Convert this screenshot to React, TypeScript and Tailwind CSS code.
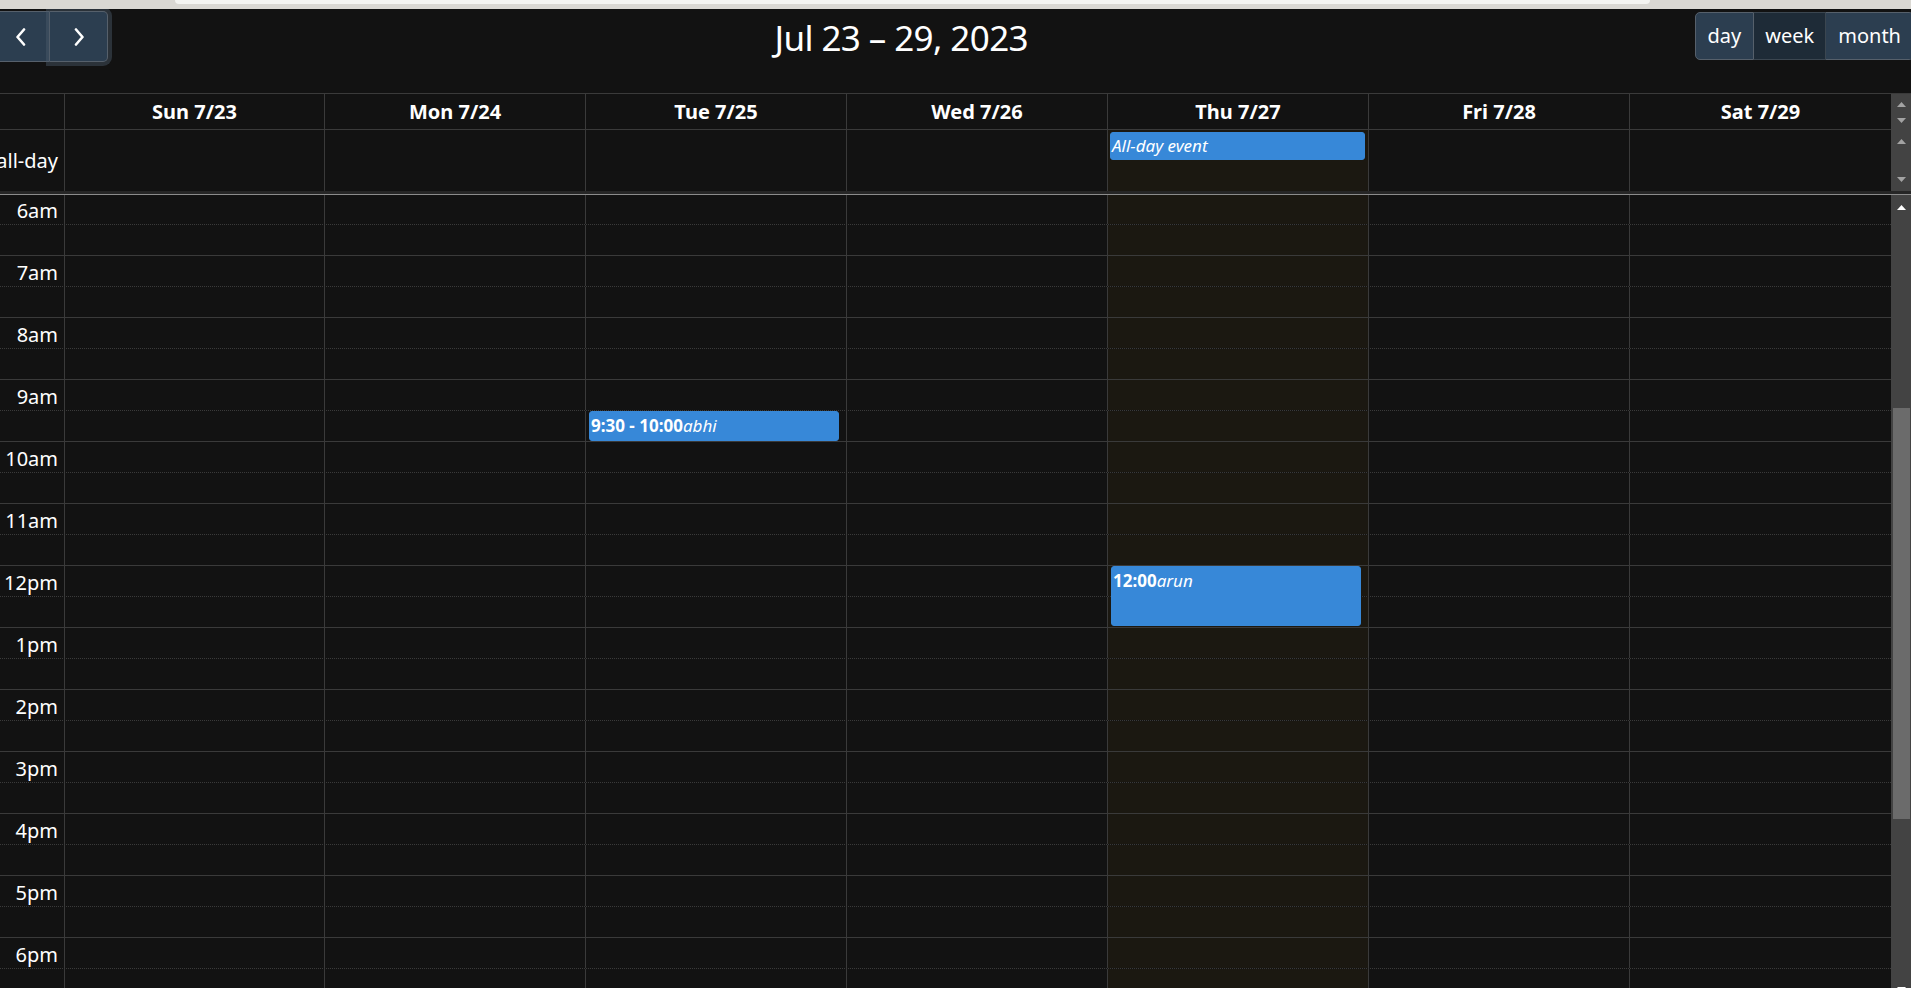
import React from 'react';

const days = [
  { label: 'Sun 7/23', w: 'w-[260px]' },
  { label: 'Mon 7/24', w: 'w-[261px]' },
  { label: 'Tue 7/25', w: 'w-[261px]' },
  { label: 'Wed 7/26', w: 'w-[261px]' },
  { label: 'Thu 7/27', w: 'w-[261px]' },
  { label: 'Fri 7/28', w: 'w-[261px]' },
  { label: 'Sat 7/29', w: 'w-[262px]' },
];
const TODAY = 4;
const hours = ['6am', '7am', '8am', '9am', '10am', '11am', '12pm', '1pm', '2pm', '3pm', '4pm', '5pm', '6pm'];

function Tri({ up, color }: { up?: boolean; color: string }) {
  return (
    <svg width="9" height="5" viewBox="0 0 9 5" className="block">
      <polygon points={up ? '0,5 9,5 4.5,0' : '0,0 9,0 4.5,5'} fill={color} />
    </svg>
  );
}

function Chevron({ left }: { left?: boolean }) {
  return (
    <svg width="12" height="18" viewBox="0 0 12 18" fill="none" stroke="white" strokeWidth="2.6" strokeLinecap="round" strokeLinejoin="round">
      <polyline points={left ? '9,1.5 2.5,9 9,16.5' : '3,1.5 9.5,9 3,16.5'} />
    </svg>
  );
}

function SlotRow({ label, hour }: { label?: string; hour: boolean }) {
  return (
    <div className={`flex h-[31px] border-b border-[#3a3a3a] ${hour ? 'border-solid' : 'border-dotted'}`}>
      <div className="h-[30px] w-[64px] shrink-0 pr-[6px] text-right text-[20px] leading-[34px] text-white">{label}</div>
      {days.map((d, i) => (
        <div key={d.label} className={`${d.w} shrink-0 border-l border-[#3a3a3a] ${i === TODAY ? 'bg-[#1b1811]' : ''}`} />
      ))}
    </div>
  );
}

export default function App() {
  return (
    <div className="h-[988px] w-[1911px] overflow-hidden bg-[#121212] font-['Noto_Sans',sans-serif] text-white">
      {/* browser chrome strip */}
      <div className="relative z-10 h-[9px] bg-[#dad8d3]">
        <div className="ml-[175px] h-[4px] w-[1475px] rounded-b-[6px] bg-[#f4f4f1]" />
      </div>

      {/* toolbar */}
      <div className="flex h-[84px] items-start justify-between">
        <div className="-ml-[8px] mt-[2px] flex h-[51px]">
          <button className="flex w-[58px] items-center justify-center rounded-l-[5px] border border-[#56606b] bg-[#2c3e50]">
            <Chevron left />
          </button>
          <button className="flex w-[58px] items-center justify-center rounded-r-[5px] border border-l-0 border-[#56606b] bg-[#2c3e50] shadow-[0_0_0_4px_rgba(76,91,106,0.45)]">
            <Chevron />
          </button>
        </div>
        <h2 className="mt-[8px] text-[35px] leading-[42px] font-normal tracking-[-0.6px]">Jul 23 – 29, 2023</h2>
        <div className="-mr-[3px] mt-[3px] flex h-[48px] text-[20px]">
          <button className="rounded-l-[5px] border border-[#56606b] bg-[#2c3e50] px-[12px]">day</button>
          <button className="border border-l-0 border-[#3b4650] bg-[#1e2b37] px-[11px]">week</button>
          <button className="rounded-r-[5px] border border-l-0 border-[#56606b] bg-[#2c3e50] px-[12px]">month</button>
        </div>
      </div>

      {/* head: day names + all-day */}
      <div className="h-px bg-[#3a3a3a]" />
      <div className="flex">
        <div className="w-[1891px]">
          <div className="flex h-[36px] border-b border-[#3a3a3a]">
            <div className="w-[64px] shrink-0" />
            {days.map((d) => (
              <div key={d.label} className={`${d.w} shrink-0 border-l border-[#3a3a3a] text-center text-[20px] leading-[35px] font-bold`}>
                {d.label}
              </div>
            ))}
          </div>
          <div className="flex h-[61px]">
            <div className="flex w-[64px] shrink-0 items-center justify-end pr-[6px] text-[20px] whitespace-nowrap">all-day</div>
            {days.map((d, i) => (
              <div key={d.label} className={`${d.w} shrink-0 border-l border-[#3a3a3a] ${i === TODAY ? 'bg-[#1b1811]' : ''}`}>
                {i === TODAY && (
                  <div className="ml-[2px] mr-[3px] mt-[2px] h-[28px] rounded-[3px] border border-[#3788d8] bg-[#3788d8] pl-px text-[17px] leading-[25px] italic text-white">
                    All-day event
                  </div>
                )}
              </div>
            ))}
          </div>
        </div>
        <div className="flex w-[20px] flex-col items-center bg-[#434343]">
          <div className="mt-[8px]"><Tri up color="#a3a3a3" /></div>
          <div className="mt-[11px]"><Tri color="#a3a3a3" /></div>
          <div className="mt-[16px]"><Tri up color="#a3a3a3" /></div>
          <div className="mt-[33px]"><Tri color="#a3a3a3" /></div>
        </div>
      </div>
      <div className="h-[3px] bg-[#262626]" />
      <div className="h-px bg-[#8c8c8c]" />

      {/* time grid */}
      <div className="flex h-[794px] overflow-hidden">
        <div className="relative -mt-px w-[1891px]">
          {hours.map((h) => (
            <React.Fragment key={h}>
              <SlotRow label={h} hour={false} />
              <SlotRow hour />
            </React.Fragment>
          ))}
          <div className="absolute left-[589px] top-[217px] h-[30px] w-[250px] rounded-[3px] border border-[#3788d8] bg-[#3788d8] pl-px text-[17px] leading-[27px] whitespace-nowrap">
            <span className="font-bold">9:30 - 10:00</span>
            <span className="italic">abhi</span>
          </div>
          <div className="absolute left-[1111px] top-[372px] h-[60px] w-[250px] rounded-[3px] border border-[#3788d8] bg-[#3788d8] pl-px text-[17px] leading-[27px] whitespace-nowrap">
            <span className="font-bold">12:00</span>
            <span className="italic">arun</span>
          </div>
        </div>
        <div className="flex h-[806px] w-[20px] shrink-0 flex-col bg-[#434343]">
          <div className="flex h-[24px] items-center justify-center"><Tri up color="#ffffff" /></div>
          <div className="ml-[2px] mr-px mt-[189px] h-[411px] bg-[#6b6b6b]" />
          <div className="flex-1" />
          <div className="flex h-[24px] items-center justify-center"><Tri color="#ffffff" /></div>
        </div>
      </div>
    </div>
  );
}
